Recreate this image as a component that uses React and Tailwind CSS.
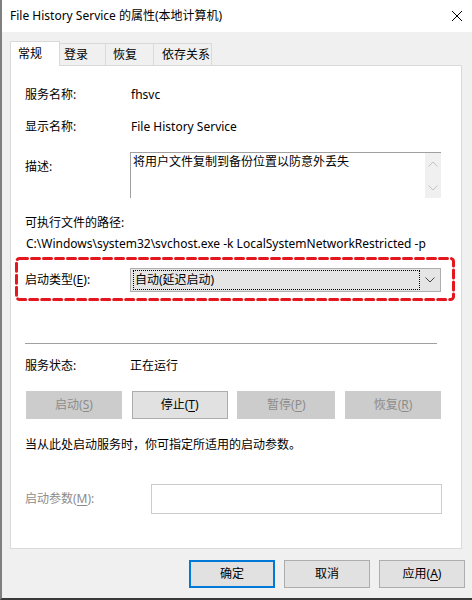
import React from 'react';

// Windows 10 service properties dialog ("常规" tab)
const tabs = [
  { label: '常规', w: 'w-[50px]', pl: 'pl-[7px]', active: true },
  { label: '登录', w: 'w-[46px]', pl: 'pl-[4px]' },
  { label: '恢复', w: 'w-[48px]', pl: 'pl-[7px]' },
  { label: '依存关系', w: 'w-[58px]', pl: 'pl-[8px]' },
];

function Mn({ children }) {
  return <span className="underline underline-offset-2">{children}</span>;
}

function ChevronDown({ className, color = '#555' }) {
  return (
    <svg width="10" height="6" viewBox="0 0 10 6" className={className}>
      <path d="M0.5 0.5 L5 5 L9.5 0.5" fill="none" stroke={color} strokeWidth="1" />
    </svg>
  );
}

function ChevronUp({ className, color = '#555' }) {
  return (
    <svg width="10" height="6" viewBox="0 0 10 6" className={className}>
      <path d="M0.5 5.5 L5 1 L9.5 5.5" fill="none" stroke={color} strokeWidth="1" />
    </svg>
  );
}

export default function App() {
  return (
    <div className="w-[472px] h-[600px] flex flex-col bg-[#f0f0f0] border-l-2 border-l-[#7f7f7f] border-b-2 border-b-[#3a3a3a] text-[12px] leading-4 text-black font-['Noto_Sans','Noto_Sans_CJK_SC',sans-serif]">
      {/* Title bar */}
      <div className="h-8 shrink-0 bg-white flex items-center justify-between pl-2 pr-2.5">
        <span>File History Service 的属性(本地计算机)</span>
        <svg width="10" height="10" viewBox="0 0 10 10">
          <path d="M0 0 L10 10 M10 0 L0 10" stroke="#000" strokeWidth="1" />
        </svg>
      </div>

      <div className="flex-1 flex flex-col pl-2 pr-2.5 pt-[9px]">
        {/* Tabs */}
        <div className="flex items-end h-6 relative z-10">
          {tabs.map((t) =>
            t.active ? (
              <div
                key={t.label}
                className={`${t.w} ${t.pl} h-[25px] -mb-px bg-white border border-b-0 border-[#d9d9d9] flex items-center`}
              >
                {t.label}
              </div>
            ) : (
              <div
                key={t.label}
                className={`${t.w} ${t.pl} h-[22px] bg-[#f0f0f0] border border-b-0 border-l-0 border-[#d9d9d9] flex items-center`}
              >
                {t.label}
              </div>
            )
          )}
        </div>

        {/* Panel */}
        <div className="h-[484px] bg-white border border-[#d9d9d9] pl-[14px] pr-[20px] flex flex-col">
          <div className="mt-[21px] flex h-4">
            <span className="w-[106px]">服务名称:</span>
            <span>fhsvc</span>
          </div>
          <div className="mt-4 flex h-4">
            <span className="w-[106px]">显示名称:</span>
            <span>File History Service</span>
          </div>
          <div className="mt-[17px] flex">
            <span className="w-[105px] pt-[7px]">描述:</span>
            <div className="flex-1 h-[46px] flex border-t border-l border-[#a0a0a0]">
              <div className="flex-1 pl-[2px] pt-px">将用户文件复制到备份位置以防意外丢失</div>
              <div className="w-4 bg-[#f0f0f0] flex flex-col items-center justify-between pt-[8px] pb-[7px]">
                <ChevronUp color="#c2c2c2" />
                <ChevronDown color="#c2c2c2" />
              </div>
            </div>
          </div>
          <div className="mt-[17px] h-4">可执行文件的路径:</div>
          <div className="mt-[5px] h-4 pl-px whitespace-nowrap">
            C:\Windows\system32\svchost.exe -k LocalSystemNetworkRestricted -p
          </div>

          {/* Startup type, highlighted */}
          <div className="mt-[5px] h-[44px] -ml-[10px] -mr-[14px] relative flex items-center pl-[10px] pr-[14px] pt-[2px]">
            <svg width="440" height="44" className="absolute inset-0 pointer-events-none">
              <rect
                x="1.5"
                y="1.5"
                width="437"
                height="41"
                rx="3"
                fill="none"
                stroke="#e3171d"
                strokeWidth="3"
                strokeDasharray="8 4"
                strokeLinecap="round"
              />
            </svg>
            <span className="w-[105px]">
              启动类型(<Mn>E</Mn>):
            </span>
            <div className="flex-1 h-6 bg-[#e5e5e5] border border-[#adadad] flex items-center pl-[2px]">
              <div className="flex-1 h-[20px] border border-dotted border-black flex items-center pl-px">
                自动(延迟启动)
              </div>
              <div className="w-5 flex justify-center">
                <ChevronDown color="#444" />
              </div>
            </div>
          </div>

          <div className="mt-[42px] h-px bg-[#a0a0a0] mr-1" />

          <div className="mt-[14px] flex h-4">
            <span className="w-[105px]">服务状态:</span>
            <span>正在运行</span>
          </div>

          <div className="mt-[17px] flex justify-between h-7 pl-px">
            <div className="w-[96px] bg-[#cccccc] border border-[#cccccc] text-[#8c8c8c] flex items-center justify-center">
              启动(<Mn>S</Mn>)
            </div>
            <div className="w-[96px] bg-[#e1e1e1] border border-[#adadad] flex items-center justify-center">
              停止(<Mn>T</Mn>)
            </div>
            <div className="w-[98px] bg-[#cccccc] border border-[#cccccc] text-[#8c8c8c] flex items-center justify-center">
              暂停(<Mn>P</Mn>)
            </div>
            <div className="w-[96px] bg-[#cccccc] border border-[#cccccc] text-[#8c8c8c] flex items-center justify-center">
              恢复(<Mn>R</Mn>)
            </div>
          </div>

          <div className="mt-[18px] h-4">当从此处启动服务时，你可指定所适用的启动参数。</div>

          <div className="mt-[31px] flex items-center h-[30px]">
            <span className="w-[126px] text-[#8c8c8c]">
              启动参数(<Mn>M</Mn>):
            </span>
            <div className="flex-1 h-[30px] border border-[#cccccc] bg-white -mr-px" />
          </div>
        </div>

        {/* Dialog buttons */}
        <div className="mt-[11px] flex justify-end gap-[9px] -mr-[3px]">
          <div className="w-[86px] h-7 bg-[#e1e1e1] border-2 border-[#0078d7] flex items-center justify-center">
            确定
          </div>
          <div className="w-[86px] h-7 bg-[#e1e1e1] border border-[#adadad] flex items-center justify-center">
            取消
          </div>
          <div className="w-[86px] h-7 bg-[#e1e1e1] border border-[#adadad] flex items-center justify-center">
            应用(<Mn>A</Mn>)
          </div>
        </div>
      </div>
    </div>
  );
}
